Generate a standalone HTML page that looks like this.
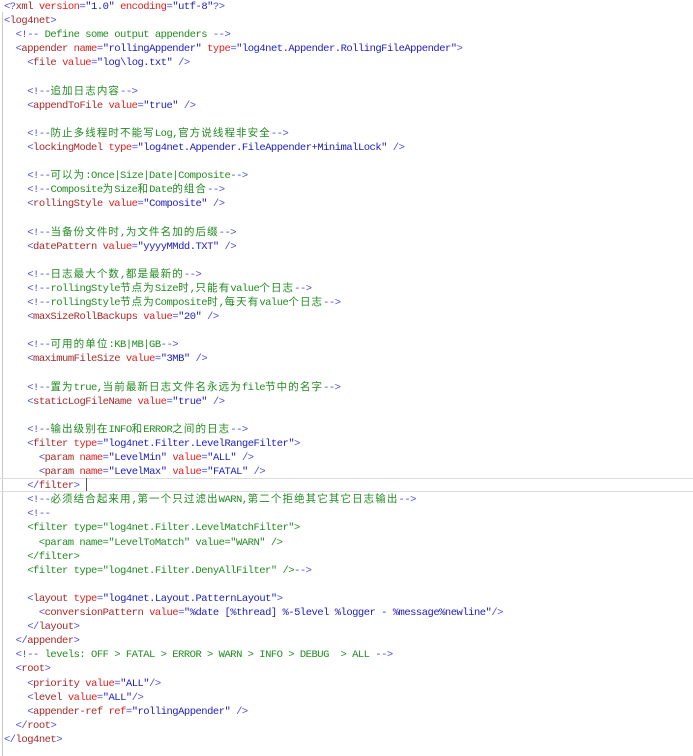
<!DOCTYPE html>
<html><head><meta charset="utf-8">
<style>
html,body{margin:0;padding:0;background:#fff;width:693px;height:756px;overflow:hidden;}
.gut{position:absolute;left:2px;top:12px;width:1px;height:744px;background:#c8c8c8;}
.cur{position:absolute;left:0;top:478px;width:693px;height:12px;border-top:1px solid #dcdcdc;border-bottom:1px solid #dcdcdc;}
.caret{position:absolute;left:86px;top:478px;width:1px;height:13px;background:#555;}
pre{position:absolute;left:4px;top:0;margin:0;font-family:"Liberation Mono",monospace;font-size:10.5px;letter-spacing:-0.5px;line-height:14.1px;color:#3030d0;}
.b{color:#4a4ae0}.n{color:#a52a2a}.a{color:#e02020}.v{color:#2020c0}.g{color:#228b22}
.z{letter-spacing:1.1px;font-family:"Noto Sans CJK SC",sans-serif;line-height:0;}
</style></head><body>
<div class="gut"></div><div class="cur"></div><div class="caret"></div>
<pre><span class="b">&lt;?</span><span class="n">xml</span> <span class="a">version</span><span class="b">=</span><span class="v">"1.0"</span> <span class="a">encoding</span><span class="b">=</span><span class="v">"utf-8"</span><span class="b">?&gt;</span>
<span class="b">&lt;</span><span class="n">log4net</span><span class="b">&gt;</span>
  <span class="b">&lt;!--</span><span class="g"> Define some output appenders </span><span class="b">--&gt;</span>
  <span class="b">&lt;</span><span class="n">appender</span> <span class="a">name</span><span class="b">=</span><span class="v">"rollingAppender"</span> <span class="a">type</span><span class="b">=</span><span class="v">"log4net.Appender.RollingFileAppender"</span><span class="b">&gt;</span>
    <span class="b">&lt;</span><span class="n">file</span> <span class="a">value</span><span class="b">=</span><span class="v">"log\log.txt"</span> <span class="b">/&gt;</span>

    <span class="b">&lt;!--</span><span class="g"><span class="z">追加日志内容</span></span><span class="b">--&gt;</span>
    <span class="b">&lt;</span><span class="n">appendToFile</span> <span class="a">value</span><span class="b">=</span><span class="v">"true"</span> <span class="b">/&gt;</span>

    <span class="b">&lt;!--</span><span class="g"><span class="z">防止多线程时不能写</span>Log,<span class="z">官方说线程非安全</span></span><span class="b">--&gt;</span>
    <span class="b">&lt;</span><span class="n">lockingModel</span> <span class="a">type</span><span class="b">=</span><span class="v">"log4net.Appender.FileAppender+MinimalLock"</span> <span class="b">/&gt;</span>

    <span class="b">&lt;!--</span><span class="g"><span class="z">可以为</span>:Once|Size|Date|Composite</span><span class="b">--&gt;</span>
    <span class="b">&lt;!--</span><span class="g">Composite<span class="z">为</span>Size<span class="z">和</span>Date<span class="z">的组合</span></span><span class="b">--&gt;</span>
    <span class="b">&lt;</span><span class="n">rollingStyle</span> <span class="a">value</span><span class="b">=</span><span class="v">"Composite"</span> <span class="b">/&gt;</span>

    <span class="b">&lt;!--</span><span class="g"><span class="z">当备份文件时</span>,<span class="z">为文件名加的后缀</span></span><span class="b">--&gt;</span>
    <span class="b">&lt;</span><span class="n">datePattern</span> <span class="a">value</span><span class="b">=</span><span class="v">"yyyyMMdd.TXT"</span> <span class="b">/&gt;</span>

    <span class="b">&lt;!--</span><span class="g"><span class="z">日志最大个数</span>,<span class="z">都是最新的</span></span><span class="b">--&gt;</span>
    <span class="b">&lt;!--</span><span class="g">rollingStyle<span class="z">节点为</span>Size<span class="z">时</span>,<span class="z">只能有</span>value<span class="z">个日志</span></span><span class="b">--&gt;</span>
    <span class="b">&lt;!--</span><span class="g">rollingStyle<span class="z">节点为</span>Composite<span class="z">时</span>,<span class="z">每天有</span>value<span class="z">个日志</span></span><span class="b">--&gt;</span>
    <span class="b">&lt;</span><span class="n">maxSizeRollBackups</span> <span class="a">value</span><span class="b">=</span><span class="v">"20"</span> <span class="b">/&gt;</span>

    <span class="b">&lt;!--</span><span class="g"><span class="z">可用的单位</span>:KB|MB|GB</span><span class="b">--&gt;</span>
    <span class="b">&lt;</span><span class="n">maximumFileSize</span> <span class="a">value</span><span class="b">=</span><span class="v">"3MB"</span> <span class="b">/&gt;</span>

    <span class="b">&lt;!--</span><span class="g"><span class="z">置为</span>true,<span class="z">当前最新日志文件名永远为</span>file<span class="z">节中的名字</span></span><span class="b">--&gt;</span>
    <span class="b">&lt;</span><span class="n">staticLogFileName</span> <span class="a">value</span><span class="b">=</span><span class="v">"true"</span> <span class="b">/&gt;</span>

    <span class="b">&lt;!--</span><span class="g"><span class="z">输出级别在</span>INFO<span class="z">和</span>ERROR<span class="z">之间的日志</span></span><span class="b">--&gt;</span>
    <span class="b">&lt;</span><span class="n">filter</span> <span class="a">type</span><span class="b">=</span><span class="v">"log4net.Filter.LevelRangeFilter"</span><span class="b">&gt;</span>
      <span class="b">&lt;</span><span class="n">param</span> <span class="a">name</span><span class="b">=</span><span class="v">"LevelMin"</span> <span class="a">value</span><span class="b">=</span><span class="v">"ALL"</span> <span class="b">/&gt;</span>
      <span class="b">&lt;</span><span class="n">param</span> <span class="a">name</span><span class="b">=</span><span class="v">"LevelMax"</span> <span class="a">value</span><span class="b">=</span><span class="v">"FATAL"</span> <span class="b">/&gt;</span>
    <span class="b">&lt;/</span><span class="n">filter</span><span class="b">&gt;</span>
    <span class="b">&lt;!--</span><span class="g"><span class="z">必须结合起来用</span>,<span class="z">第一个只过滤出</span>WARN,<span class="z">第二个拒绝其它其它日志输出</span></span><span class="b">--&gt;</span>
    <span class="b">&lt;!--</span>
<span class="g">    &lt;filter type="log4net.Filter.LevelMatchFilter"&gt;
      &lt;param name="LevelToMatch" value="WARN" /&gt;
    &lt;/filter&gt;
    &lt;filter type="log4net.Filter.DenyAllFilter" /&gt;</span><span class="b">--&gt;</span>

    <span class="b">&lt;</span><span class="n">layout</span> <span class="a">type</span><span class="b">=</span><span class="v">"log4net.Layout.PatternLayout"</span><span class="b">&gt;</span>
      <span class="b">&lt;</span><span class="n">conversionPattern</span> <span class="a">value</span><span class="b">=</span><span class="v">"%date [%thread] %-5level %logger - %message%newline"</span><span class="b">/&gt;</span>
    <span class="b">&lt;/</span><span class="n">layout</span><span class="b">&gt;</span>
  <span class="b">&lt;/</span><span class="n">appender</span><span class="b">&gt;</span>
  <span class="b">&lt;!--</span><span class="g"> levels: OFF &gt; FATAL &gt; ERROR &gt; WARN &gt; INFO &gt; DEBUG  &gt; ALL </span><span class="b">--&gt;</span>
  <span class="b">&lt;</span><span class="n">root</span><span class="b">&gt;</span>
    <span class="b">&lt;</span><span class="n">priority</span> <span class="a">value</span><span class="b">=</span><span class="v">"ALL"</span><span class="b">/&gt;</span>
    <span class="b">&lt;</span><span class="n">level</span> <span class="a">value</span><span class="b">=</span><span class="v">"ALL"</span><span class="b">/&gt;</span>
    <span class="b">&lt;</span><span class="n">appender-ref</span> <span class="a">ref</span><span class="b">=</span><span class="v">"rollingAppender"</span> <span class="b">/&gt;</span>
  <span class="b">&lt;/</span><span class="n">root</span><span class="b">&gt;</span>
<span class="b">&lt;/</span><span class="n">log4net</span><span class="b">&gt;</span></pre>
</body></html>
